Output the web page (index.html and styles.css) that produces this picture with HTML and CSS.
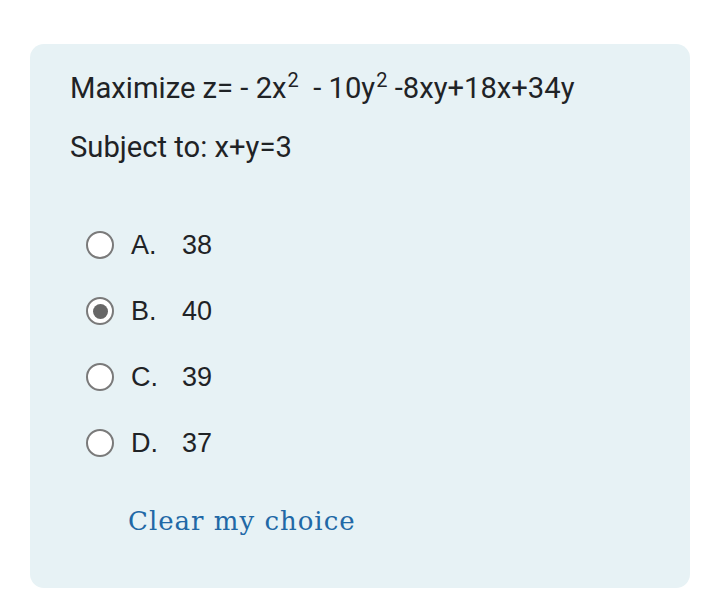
FILE: index.html
```html
<!DOCTYPE html>
<html>
<head>
<meta charset="utf-8">
<link rel="stylesheet" href="styles.css">
</head>
<body>
<div class="card">
  <p class="q q1">Maximize z= - 2x<sup>2</sup>&nbsp; - 10y<sup>2</sup> -8xy+18x+34y</p>
  <p class="q q2">Subject to: x+y=3</p>
  <div class="options">
    <div class="opt"><span class="radio"></span><span class="letter">A.</span><span class="val">38</span></div>
    <div class="opt"><span class="radio checked"></span><span class="letter">B.</span><span class="val">40</span></div>
    <div class="opt"><span class="radio"></span><span class="letter">C.</span><span class="val">39</span></div>
    <div class="opt"><span class="radio"></span><span class="letter">D.</span><span class="val">37</span></div>
  </div>
  <a class="clear">Clear my choice</a>
</div>
</body>
</html>
```
FILE: styles.css
```css
html, body { margin: 0; padding: 0; background: #ffffff; }
body { width: 720px; height: 598px; overflow: hidden; }
.card {
  margin: 44px 0 0 30px;
  width: 660px;
  height: 544px;
  box-sizing: border-box;
  background: #e7f2f5;
  border-radius: 14px;
  padding: 27px 40px 0 40px;
}
.q {
  margin: 0;
  font-family: Roboto, "Liberation Sans", sans-serif;
  font-size: 29.2px;
  line-height: 34px;
  color: #1f2326;
}
.q2 { margin-top: 25px; }
.q sup { font-size: 20px; line-height: 0; vertical-align: 11px; margin-left: 1px; }
.options { margin-top: 48px; display: flex; flex-direction: column; }
.opt {
  height: 66px;
  display: flex;
  align-items: center;
  padding-left: 16px;
  font-family: "Liberation Sans", Arial, sans-serif;
  font-size: 27px;
  color: #1f2326;
}
.radio {
  width: 28px; height: 28px;
  box-sizing: border-box;
  border: 2px solid #7a7a7a;
  border-radius: 50%;
  background: #ffffff;
  margin-right: 17px;
  display: flex; align-items: center; justify-content: center;
}
.radio.checked::after {
  content: "";
  width: 15px; height: 15px;
  border-radius: 50%;
  background: #676767;
}
.letter { width: 51px; }
.clear {
  display: block;
  margin-top: 30px;
  margin-left: 58px;
  font-family: "DejaVu Serif", serif;
  font-size: 26px;
  letter-spacing: 1px;
  color: #2168a6;
}
```
